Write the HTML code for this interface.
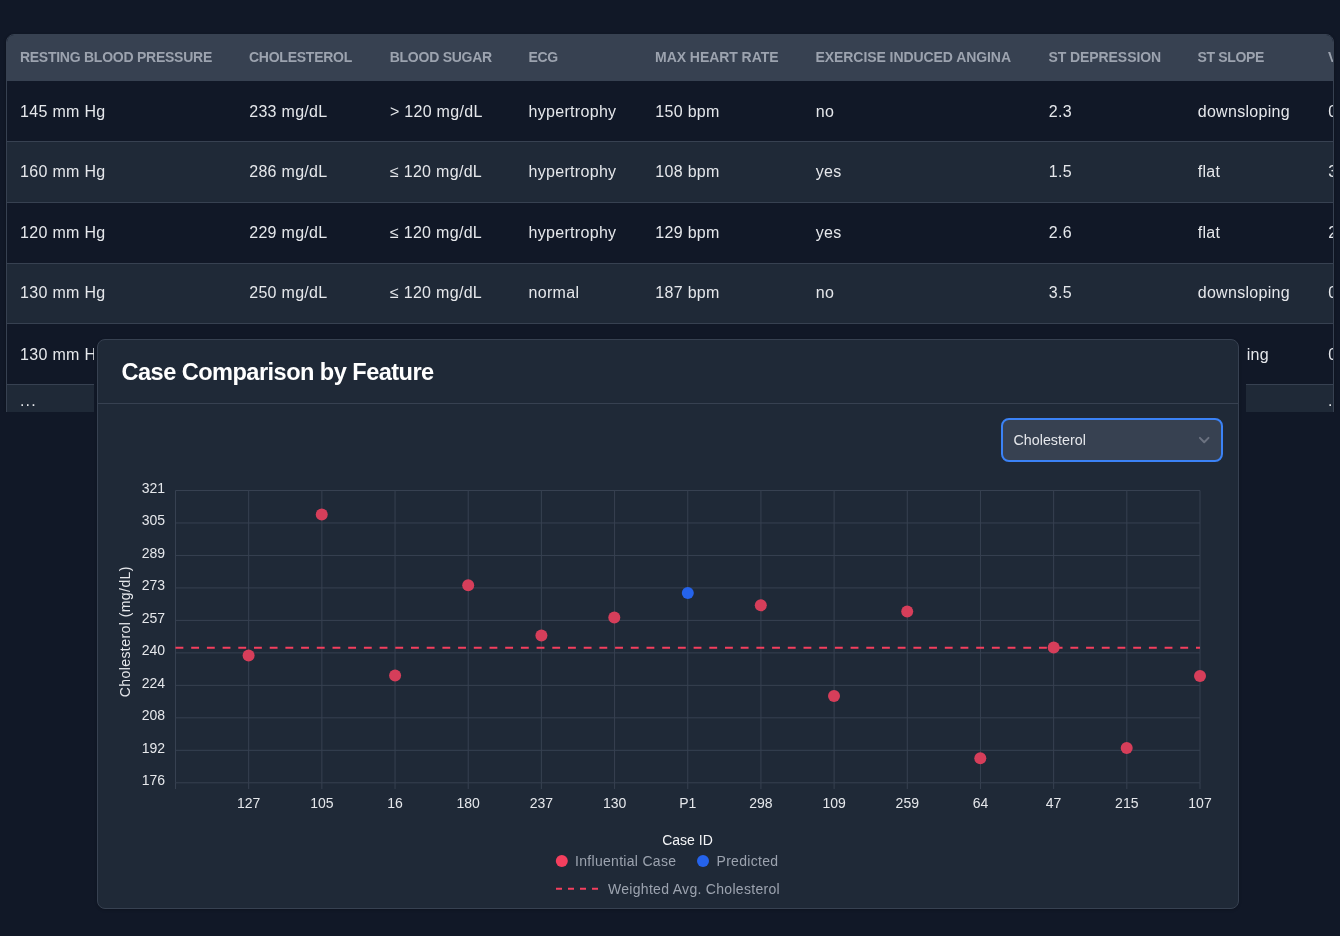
<!DOCTYPE html>
<html><head><meta charset="utf-8"><style>
*{box-sizing:border-box;margin:0;padding:0}
html,body{width:1340px;height:936px;overflow:hidden;background:#111827;font-family:"Liberation Sans",sans-serif}
.abs{position:absolute}
.tclip{position:absolute;left:0;top:0;width:1340px;height:412px;overflow:hidden}
.tbl{position:absolute;left:6px;top:34px;width:1328px;height:420px;border:1px solid #374151;border-radius:8px 8px 0 0;overflow:hidden;background:#111827;box-shadow:0 1px 3px rgba(0,0,0,.3)}
.hd{position:absolute;left:0;top:0;width:100%;height:47px;background:#374151}
.ht{position:absolute;top:-1px;height:46px;line-height:46px;font-size:14px;font-weight:bold;color:#9ca3af;white-space:nowrap;letter-spacing:-0.25px}
.row{position:absolute;left:0;width:100%}
.rl{position:absolute;left:0;width:100%;height:1px;background:#374151}
.ct{position:absolute;font-size:16px;color:#e5e7eb;white-space:nowrap;letter-spacing:0.3px}
.wrap{position:absolute;left:0;top:0;width:1340px;height:936px;will-change:transform}
</style></head><body><div class="wrap">
<div class="tclip"><div class="tbl">
<div class="hd">
<div class="ht" style="left:12.9px;letter-spacing:-0.25px">RESTING BLOOD PRESSURE</div>
<div class="ht" style="left:242.0px;letter-spacing:-0.25px">CHOLESTEROL</div>
<div class="ht" style="left:382.7px;letter-spacing:-0.25px">BLOOD SUGAR</div>
<div class="ht" style="left:521.4px;letter-spacing:-0.25px">ECG</div>
<div class="ht" style="left:648.1px;letter-spacing:-0.06px">MAX HEART RATE</div>
<div class="ht" style="left:808.5px;letter-spacing:-0.07px">EXERCISE INDUCED ANGINA</div>
<div class="ht" style="left:1041.5px;letter-spacing:-0.08px">ST DEPRESSION</div>
<div class="ht" style="left:1190.5px;letter-spacing:-0.35px">ST SLOPE</div>
<div class="ht" style="left:1321.0px;letter-spacing:-0.25px">VESSELS</div>
</div>
<div class="row" style="top:46px;height:60.5px;background:#111827"></div>
<div class="row" style="top:106.5px;height:60.5px;background:#1f2937"></div>
<div class="row" style="top:167px;height:60.5px;background:#111827"></div>
<div class="row" style="top:227.5px;height:60.5px;background:#1f2937"></div>
<div class="row" style="top:288px;height:61px;background:#111827"></div>
<div class="row" style="top:349px;height:86px;background:#1f2937"></div>
<div class="rl" style="top:106px"></div>
<div class="rl" style="top:167px"></div>
<div class="rl" style="top:227.5px"></div>
<div class="rl" style="top:288px"></div>
<div class="rl" style="top:349px"></div>
<div class="ct" style="left:13.1px;top:46.5px;height:60.5px;line-height:60.5px">145 mm Hg</div>
<div class="ct" style="left:242.2px;top:46.5px;height:60.5px;line-height:60.5px">233 mg/dL</div>
<div class="ct" style="left:382.9px;top:46.5px;height:60.5px;line-height:60.5px">&gt; 120 mg/dL</div>
<div class="ct" style="left:521.6px;top:46.5px;height:60.5px;line-height:60.5px">hypertrophy</div>
<div class="ct" style="left:648.3px;top:46.5px;height:60.5px;line-height:60.5px">150 bpm</div>
<div class="ct" style="left:808.7px;top:46.5px;height:60.5px;line-height:60.5px">no</div>
<div class="ct" style="left:1041.7px;top:46.5px;height:60.5px;line-height:60.5px">2.3</div>
<div class="ct" style="left:1190.7px;top:46.5px;height:60.5px;line-height:60.5px">downsloping</div>
<div class="ct" style="left:1321.2px;top:46.5px;height:60.5px;line-height:60.5px">0</div>
<div class="ct" style="left:13.1px;top:107.0px;height:60.5px;line-height:60.5px">160 mm Hg</div>
<div class="ct" style="left:242.2px;top:107.0px;height:60.5px;line-height:60.5px">286 mg/dL</div>
<div class="ct" style="left:382.9px;top:107.0px;height:60.5px;line-height:60.5px">&le; 120 mg/dL</div>
<div class="ct" style="left:521.6px;top:107.0px;height:60.5px;line-height:60.5px">hypertrophy</div>
<div class="ct" style="left:648.3px;top:107.0px;height:60.5px;line-height:60.5px">108 bpm</div>
<div class="ct" style="left:808.7px;top:107.0px;height:60.5px;line-height:60.5px">yes</div>
<div class="ct" style="left:1041.7px;top:107.0px;height:60.5px;line-height:60.5px">1.5</div>
<div class="ct" style="left:1190.7px;top:107.0px;height:60.5px;line-height:60.5px">flat</div>
<div class="ct" style="left:1321.2px;top:107.0px;height:60.5px;line-height:60.5px">3</div>
<div class="ct" style="left:13.1px;top:167.5px;height:60.5px;line-height:60.5px">120 mm Hg</div>
<div class="ct" style="left:242.2px;top:167.5px;height:60.5px;line-height:60.5px">229 mg/dL</div>
<div class="ct" style="left:382.9px;top:167.5px;height:60.5px;line-height:60.5px">&le; 120 mg/dL</div>
<div class="ct" style="left:521.6px;top:167.5px;height:60.5px;line-height:60.5px">hypertrophy</div>
<div class="ct" style="left:648.3px;top:167.5px;height:60.5px;line-height:60.5px">129 bpm</div>
<div class="ct" style="left:808.7px;top:167.5px;height:60.5px;line-height:60.5px">yes</div>
<div class="ct" style="left:1041.7px;top:167.5px;height:60.5px;line-height:60.5px">2.6</div>
<div class="ct" style="left:1190.7px;top:167.5px;height:60.5px;line-height:60.5px">flat</div>
<div class="ct" style="left:1321.2px;top:167.5px;height:60.5px;line-height:60.5px">2</div>
<div class="ct" style="left:13.1px;top:228.0px;height:60.5px;line-height:60.5px">130 mm Hg</div>
<div class="ct" style="left:242.2px;top:228.0px;height:60.5px;line-height:60.5px">250 mg/dL</div>
<div class="ct" style="left:382.9px;top:228.0px;height:60.5px;line-height:60.5px">&le; 120 mg/dL</div>
<div class="ct" style="left:521.6px;top:228.0px;height:60.5px;line-height:60.5px">normal</div>
<div class="ct" style="left:648.3px;top:228.0px;height:60.5px;line-height:60.5px">187 bpm</div>
<div class="ct" style="left:808.7px;top:228.0px;height:60.5px;line-height:60.5px">no</div>
<div class="ct" style="left:1041.7px;top:228.0px;height:60.5px;line-height:60.5px">3.5</div>
<div class="ct" style="left:1190.7px;top:228.0px;height:60.5px;line-height:60.5px">downsloping</div>
<div class="ct" style="left:1321.2px;top:228.0px;height:60.5px;line-height:60.5px">0</div>
<div class="ct" style="left:13.1px;top:288.5px;height:61px;line-height:61px">130 mm Hg</div>
<div class="ct" style="left:242.2px;top:288.5px;height:61px;line-height:61px">254 mg/dL</div>
<div class="ct" style="left:382.9px;top:288.5px;height:61px;line-height:61px">&le; 120 mg/dL</div>
<div class="ct" style="left:521.6px;top:288.5px;height:61px;line-height:61px">normal</div>
<div class="ct" style="left:648.3px;top:288.5px;height:61px;line-height:61px">147 bpm</div>
<div class="ct" style="left:808.7px;top:288.5px;height:61px;line-height:61px">no</div>
<div class="ct" style="left:1041.7px;top:288.5px;height:61px;line-height:61px">1.4</div>
<div class="ct" style="left:1190.7px;top:288.5px;height:61px;line-height:61px">upsloping</div>
<div class="ct" style="left:1321.2px;top:288.5px;height:61px;line-height:61px">0</div>
<div class="ct" style="left:12.9px;top:349px;height:30px;line-height:30px;letter-spacing:1.2px;top:351px">...</div>
<div class="ct" style="left:242.0px;top:349px;height:30px;line-height:30px;letter-spacing:1.2px;top:351px">...</div>
<div class="ct" style="left:382.7px;top:349px;height:30px;line-height:30px;letter-spacing:1.2px;top:351px">...</div>
<div class="ct" style="left:521.4px;top:349px;height:30px;line-height:30px;letter-spacing:1.2px;top:351px">...</div>
<div class="ct" style="left:648.1px;top:349px;height:30px;line-height:30px;letter-spacing:1.2px;top:351px">...</div>
<div class="ct" style="left:808.5px;top:349px;height:30px;line-height:30px;letter-spacing:1.2px;top:351px">...</div>
<div class="ct" style="left:1041.5px;top:349px;height:30px;line-height:30px;letter-spacing:1.2px;top:351px">...</div>
<div class="ct" style="left:1190.5px;top:349px;height:30px;line-height:30px;letter-spacing:1.2px;top:351px">...</div>
<div class="ct" style="left:1321.0px;top:349px;height:30px;line-height:30px;letter-spacing:1.2px;top:351px">...</div>
</div>
<div class="abs" style="left:94px;top:326px;width:1152px;height:120px;background:#111827"></div>
</div>
<div class="abs" style="left:97px;top:339px;width:1142px;height:570px;background:#1f2937;border:1px solid #374151;border-radius:8px;box-shadow:0 1px 3px rgba(0,0,0,.2)">
<div class="abs" style="left:0;top:63px;width:100%;height:1px;background:#374151"></div>
</div>
<div class="abs" style="left:121.5px;top:355.5px;font-size:23.6px;font-weight:bold;color:#ffffff;line-height:32px;white-space:nowrap;letter-spacing:-0.55px">Case Comparison by Feature</div>
<div class="abs" style="left:1001px;top:418px;width:222px;height:44px;background:#374151;border:2px solid #3b82f6;border-radius:8px"></div>
<div class="abs" style="left:1013.5px;top:418px;height:44px;line-height:44px;font-size:14.3px;color:#e5e7eb;white-space:nowrap">Cholesterol</div>

<svg class="abs" style="left:0;top:0" width="1340" height="936" viewBox="0 0 1340 936">
<path d="M175.5 490.50H1200 M175.5 522.98H1200 M175.5 555.46H1200 M175.5 587.93H1200 M175.5 620.41H1200 M175.5 652.89H1200 M175.5 685.37H1200 M175.5 717.84H1200 M175.5 750.32H1200 M175.5 782.80H1200 M175.50 490.5V782.80 M175.50 782.8V789 M248.68 490.5V782.80 M248.68 782.8V789 M321.86 490.5V782.80 M321.86 782.8V789 M395.04 490.5V782.80 M395.04 782.8V789 M468.21 490.5V782.80 M468.21 782.8V789 M541.39 490.5V782.80 M541.39 782.8V789 M614.57 490.5V782.80 M614.57 782.8V789 M687.75 490.5V782.80 M687.75 782.8V789 M760.93 490.5V782.80 M760.93 782.8V789 M834.11 490.5V782.80 M834.11 782.8V789 M907.29 490.5V782.80 M907.29 782.8V789 M980.46 490.5V782.80 M980.46 782.8V789 M1053.64 490.5V782.80 M1053.64 782.8V789 M1126.82 490.5V782.80 M1126.82 782.8V789 M1200.00 490.5V782.80 M1200.00 782.8V789" stroke="#374151" stroke-width="1" fill="none"/>
<text x="165" y="492.8" text-anchor="end" font-size="14" fill="#e5e7eb" font-family="Liberation Sans">321</text>
<text x="165" y="525.3" text-anchor="end" font-size="14" fill="#e5e7eb" font-family="Liberation Sans">305</text>
<text x="165" y="557.8" text-anchor="end" font-size="14" fill="#e5e7eb" font-family="Liberation Sans">289</text>
<text x="165" y="590.2" text-anchor="end" font-size="14" fill="#e5e7eb" font-family="Liberation Sans">273</text>
<text x="165" y="622.7" text-anchor="end" font-size="14" fill="#e5e7eb" font-family="Liberation Sans">257</text>
<text x="165" y="655.2" text-anchor="end" font-size="14" fill="#e5e7eb" font-family="Liberation Sans">240</text>
<text x="165" y="687.7" text-anchor="end" font-size="14" fill="#e5e7eb" font-family="Liberation Sans">224</text>
<text x="165" y="720.1" text-anchor="end" font-size="14" fill="#e5e7eb" font-family="Liberation Sans">208</text>
<text x="165" y="752.6" text-anchor="end" font-size="14" fill="#e5e7eb" font-family="Liberation Sans">192</text>
<text x="165" y="785.1" text-anchor="end" font-size="14" fill="#e5e7eb" font-family="Liberation Sans">176</text>
<text x="248.7" y="808" text-anchor="middle" font-size="14" fill="#e5e7eb" font-family="Liberation Sans">127</text>
<text x="321.9" y="808" text-anchor="middle" font-size="14" fill="#e5e7eb" font-family="Liberation Sans">105</text>
<text x="395.0" y="808" text-anchor="middle" font-size="14" fill="#e5e7eb" font-family="Liberation Sans">16</text>
<text x="468.2" y="808" text-anchor="middle" font-size="14" fill="#e5e7eb" font-family="Liberation Sans">180</text>
<text x="541.4" y="808" text-anchor="middle" font-size="14" fill="#e5e7eb" font-family="Liberation Sans">237</text>
<text x="614.6" y="808" text-anchor="middle" font-size="14" fill="#e5e7eb" font-family="Liberation Sans">130</text>
<text x="687.8" y="808" text-anchor="middle" font-size="14" fill="#e5e7eb" font-family="Liberation Sans">P1</text>
<text x="760.9" y="808" text-anchor="middle" font-size="14" fill="#e5e7eb" font-family="Liberation Sans">298</text>
<text x="834.1" y="808" text-anchor="middle" font-size="14" fill="#e5e7eb" font-family="Liberation Sans">109</text>
<text x="907.3" y="808" text-anchor="middle" font-size="14" fill="#e5e7eb" font-family="Liberation Sans">259</text>
<text x="980.5" y="808" text-anchor="middle" font-size="14" fill="#e5e7eb" font-family="Liberation Sans">64</text>
<text x="1053.6" y="808" text-anchor="middle" font-size="14" fill="#e5e7eb" font-family="Liberation Sans">47</text>
<text x="1126.8" y="808" text-anchor="middle" font-size="14" fill="#e5e7eb" font-family="Liberation Sans">215</text>
<text x="1200.0" y="808" text-anchor="middle" font-size="14" fill="#e5e7eb" font-family="Liberation Sans">107</text>
<text transform="translate(129.8 631.7) rotate(-90)" text-anchor="middle" font-size="14" letter-spacing="0.44" fill="#e5e7eb" font-family="Liberation Sans">Cholesterol (mg/dL)</text>
<text x="687.5" y="845.2" text-anchor="middle" font-size="14" fill="#f3f4f6" font-family="Liberation Sans">Case ID</text>
<path d="M175.5 647.7H1200" stroke="#f43f5e" stroke-width="2" stroke-dasharray="7.85 7.85" fill="none"/>
<circle cx="248.6" cy="655.6" r="6" fill="#d63e5a"/>
<circle cx="321.75" cy="514.5" r="6" fill="#d63e5a"/>
<circle cx="395.1" cy="675.6" r="6" fill="#d63e5a"/>
<circle cx="468.2" cy="585.2" r="6" fill="#d63e5a"/>
<circle cx="541.4" cy="635.5" r="6" fill="#d63e5a"/>
<circle cx="614.3" cy="617.4" r="6" fill="#d63e5a"/>
<circle cx="687.8" cy="593.1" r="6" fill="#2563eb"/>
<circle cx="760.8" cy="605.3" r="6" fill="#d63e5a"/>
<circle cx="834" cy="695.9" r="6" fill="#d63e5a"/>
<circle cx="907.2" cy="611.5" r="6" fill="#d63e5a"/>
<circle cx="980.3" cy="758.3" r="6" fill="#d63e5a"/>
<circle cx="1053.7" cy="647.5" r="6" fill="#d63e5a"/>
<circle cx="1126.7" cy="748.1" r="6" fill="#d63e5a"/>
<circle cx="1200" cy="675.9" r="6" fill="#d63e5a"/>
<path d="M1199.9 437.9L1204.2 442.2L1208.5 437.9" stroke="#6b7280" stroke-width="2" fill="none" stroke-linecap="round" stroke-linejoin="round"/>
<circle cx="561.8" cy="861" r="6" fill="#f43f5e"/>
<text x="575" y="866" font-size="14" letter-spacing="0.3" fill="#9ca3af" font-family="Liberation Sans">Influential Case</text>
<circle cx="703" cy="861" r="6" fill="#2563eb"/>
<text x="716.5" y="866" font-size="14" letter-spacing="0.3" fill="#9ca3af" font-family="Liberation Sans">Predicted</text>
<path d="M556 888.8H598" stroke="#f43f5e" stroke-width="2" stroke-dasharray="6 6" fill="none"/>
<text x="608" y="893.5" font-size="14" letter-spacing="0.3" fill="#9ca3af" font-family="Liberation Sans">Weighted Avg. Cholesterol</text>
</svg>
</div></body></html>
